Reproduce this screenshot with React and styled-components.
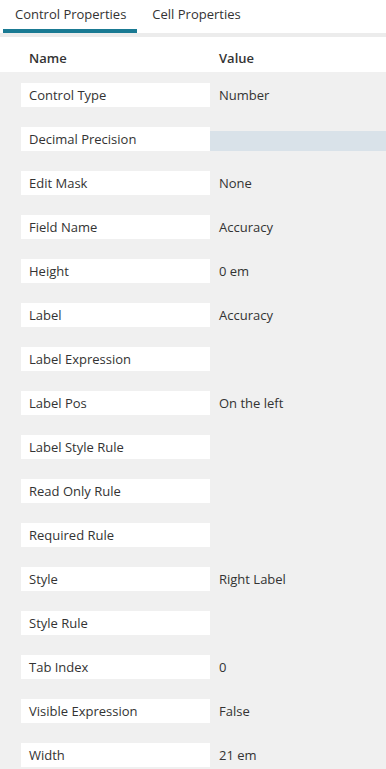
import React from "react";
import styled, { createGlobalStyle } from "styled-components";

const Global = createGlobalStyle`
  html, body { margin: 0; padding: 0; background: #f0f0f0; }
  body { font-family: "Open Sans", "Noto Sans", sans-serif; color: #333; }
`;

const Page = styled.div`
  width: 386px;
  min-height: 769px;
  background: #f0f0f0;
  display: flex;
  flex-direction: column;
`;

const TabBar = styled.div`
  background: #fff;
  height: 33px;
  display: flex;
  align-items: stretch;
  padding-left: 3px;
  border-bottom: 4px solid #ececec;
`;

const Tab = styled.div`
  box-sizing: border-box;
  padding: 0 ${(p) => p.$pr}px 1px ${(p) => p.$pl}px;
  display: flex;
  align-items: center;
  white-space: nowrap;
  font-size: 13px;
  color: #333;
  border-bottom: 4px solid ${(p) => (p.$active ? "#1a7a93" : "transparent")};
`;

const Header = styled.div`
  background: #fff;
  height: 35px;
  display: grid;
  grid-template-columns: 219px 1fr;
  align-items: center;
  font-size: 13px;
  font-weight: 600;
  color: #333;
  padding-top: 6px;
  box-sizing: border-box;
`;

const HeadCell = styled.div`
  padding-left: ${(p) => (p.$first ? "29px" : "0")};
`;

const List = styled.div`
  display: flex;
  flex-direction: column;
  gap: 20px;
  padding-top: 11px;
`;

const Row = styled.div`
  display: grid;
  grid-template-columns: 21px 189px 1fr;
  height: 24px;
  font-size: 13px;
`;

const NameBox = styled.div`
  grid-column: 2;
  background: #fff;
  display: flex;
  align-items: center;
  padding-left: 8px;
`;

const Value = styled.div`
  grid-column: 3;
  display: flex;
  align-items: center;
  padding-left: 9px;
  ${(p) =>
    p.$input &&
    `
    background: #d9e2e9;
    margin-top: 4px;
    height: 20px;
  `}
`;

const rows = [
  ["Control Type", "Number"],
  ["Decimal Precision", null, true],
  ["Edit Mask", "None"],
  ["Field Name", "Accuracy"],
  ["Height", "0 em"],
  ["Label", "Accuracy"],
  ["Label Expression", ""],
  ["Label Pos", "On the left"],
  ["Label Style Rule", ""],
  ["Read Only Rule", ""],
  ["Required Rule", ""],
  ["Style", "Right Label"],
  ["Style Rule", ""],
  ["Tab Index", "0"],
  ["Visible Expression", "False"],
  ["Width", "21 em"],
];

export default function App() {
  return (
    <Page>
      <Global />
      <TabBar>
        <Tab $active $pl={12} $pr={11}>Control Properties</Tab>
        <Tab $pl={15} $pr={12}>Cell Properties</Tab>
      </TabBar>
      <Header>
        <HeadCell $first>Name</HeadCell>
        <HeadCell>Value</HeadCell>
      </Header>
      <List>
        {rows.map(([n, v, inp]) => (
          <Row key={n}>
            <NameBox>{n}</NameBox>
            <Value $input={inp}>{v}</Value>
          </Row>
        ))}
      </List>
    </Page>
  );
}
